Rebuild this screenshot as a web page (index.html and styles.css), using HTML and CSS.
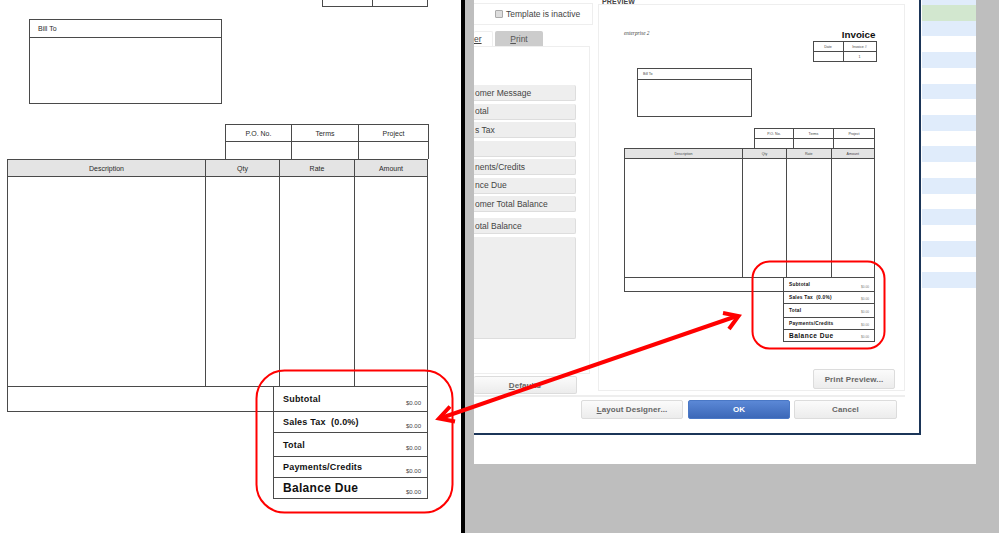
FILE: index.html
```html
<!DOCTYPE html>
<html lang="en">
<head>
<meta charset="utf-8">
<title>Invoice template</title>
<link rel="stylesheet" href="styles.css">
</head>
<body>
<main class="page">
  <section class="left doc">
    <div class="stub"><div></div><div></div></div>
    <div class="bill">
      <div class="bill-head">Bill To</div>
    </div>
    <div class="po">
      <div class="cell">P.O. No.</div><div class="cell">Terms</div><div class="cell end">Project</div>
      <div class="cell blank"></div><div class="cell blank"></div><div class="cell blank end"></div>
    </div>
    <div class="items">
      <div class="cell head">Description</div><div class="cell head">Qty</div><div class="cell head">Rate</div><div class="cell head end">Amount</div>
      <div class="col"></div><div class="col"></div><div class="col"></div><div class="col end"></div>
    </div>
    <div class="foot">
      <div class="foot-left"></div>
      <div class="totals">
        <div class="row r1"><span class="label">Subtotal</span><span class="amt">$0.00</span></div>
        <div class="row r2"><span class="label">Sales Tax&nbsp; (0.0%)</span><span class="amt">$0.00</span></div>
        <div class="row r3"><span class="label">Total</span><span class="amt">$0.00</span></div>
        <div class="row r4"><span class="label">Payments/Credits</span><span class="amt">$0.00</span></div>
        <div class="row r5"><span class="label big">Balance Due</span><span class="amt">$0.00</span></div>
      </div>
    </div>
  </section>

  <div class="divider"></div>

  <section class="right">
    <div class="sheet">
      <div class="dialog">
        <div class="dialog-main">
          <div class="settings">
            <div class="inactive"><span class="check"></span><span>Template is inactive</span></div>
            <div class="tabs">
              <div class="tab active"><u>er</u></div>
              <div class="tab"><u>P</u>rint</div>
            </div>
            <div class="panel">
              <div class="field">omer Message</div>
              <div class="field">otal</div>
              <div class="field">s Tax</div>
              <div class="field"></div>
              <div class="field">nents/Credits</div>
              <div class="field">nce Due</div>
              <div class="field">omer Total Balance</div>
              <div class="field apart">otal Balance</div>
              <div class="field area"></div>
            </div>
            <button class="btn defaults"><u>D</u>efaults</button>
          </div>
          <div class="preview">
            <div class="legend">PREVIEW</div>
            <div class="preview-box">
              <div class="mini doc">
                <div class="mini-head">
                  <span class="brand">enterprise 2</span>
                  <div class="mini-title">
                    <div class="invoice">Invoice</div>
                    <div class="date">
                      <div class="cell">Date</div><div class="cell end">Invoice #</div>
                      <div class="cell blank"></div><div class="cell blank end">1</div>
                    </div>
                  </div>
                </div>
                <div class="bill">
                  <div class="bill-head">Bill To</div>
                </div>
                <div class="po">
                  <div class="cell">P.O. No.</div><div class="cell">Terms</div><div class="cell end">Project</div>
                  <div class="cell blank"></div><div class="cell blank"></div><div class="cell blank end"></div>
                </div>
                <div class="items">
                  <div class="cell head">Description</div><div class="cell head">Qty</div><div class="cell head">Rate</div><div class="cell head end">Amount</div>
                  <div class="col"></div><div class="col"></div><div class="col"></div><div class="col end"></div>
                </div>
                <div class="foot">
                  <div class="foot-left"></div>
                  <div class="totals">
                    <div class="row r1"><span class="label">Subtotal</span><span class="amt">$0.00</span></div>
                    <div class="row r2"><span class="label">Sales Tax&nbsp; (0.0%)</span><span class="amt">$0.00</span></div>
                    <div class="row r3"><span class="label">Total</span><span class="amt">$0.00</span></div>
                    <div class="row r4"><span class="label">Payments/Credits</span><span class="amt">$0.00</span></div>
                    <div class="row r5"><span class="label big">Balance Due</span><span class="amt">$0.00</span></div>
                  </div>
                </div>
              </div>
              <button class="btn print">Print Preview...</button>
            </div>
          </div>
        </div>
        <div class="separator"></div>
        <div class="actions">
          <button class="btn"><u>L</u>ayout Designer...</button>
          <button class="btn ok">OK</button>
          <button class="btn cancel">Cancel</button>
        </div>
      </div>
      <div class="stripes">
        <div class="s blue first"></div><div class="s green"></div>
        <div class="s blue"></div><div class="s"></div>
        <div class="s blue"></div><div class="s"></div>
        <div class="s blue"></div><div class="s"></div>
        <div class="s blue"></div><div class="s"></div>
        <div class="s blue"></div><div class="s"></div>
        <div class="s blue"></div><div class="s"></div>
        <div class="s blue"></div><div class="s"></div>
        <div class="s blue"></div><div class="s"></div>
        <div class="s blue"></div>
      </div>
    </div>
  </section>

  <svg class="marks" width="999" height="533" viewBox="0 0 999 533" aria-hidden="true">
    <rect x="256.5" y="370.5" width="196" height="142" rx="28" fill="none" stroke="#f00" stroke-width="2"/>
    <rect x="752.5" y="261.5" width="132" height="87" rx="17" fill="none" stroke="#f00" stroke-width="2"/>
    <path d="M441 418 L737 316" fill="none" stroke="#f00" stroke-width="4"/>
    <path d="M450 406.5 L439 418.5 L455 421.5" fill="none" stroke="#f00" stroke-width="4"/>
    <path d="M723 313 L738.5 316 L729 329" fill="none" stroke="#f00" stroke-width="4"/>
  </svg>
</main>
</body>
</html>
```
FILE: styles.css
```css
* { box-sizing: border-box; }
html, body { margin: 0; padding: 0; }
body { font-family: "Liberation Sans", Arial, sans-serif; color: #333; background: #fff; }

.page { position: relative; display: flex; width: 999px; height: 533px; overflow: hidden; background: #fff; }
.marks { position: absolute; left: 0; top: 0; pointer-events: none; }

/* Invoice form: shared structure, full-size variant */
.doc { --line: 1px solid #4a4a4a; display: flex; flex-direction: column; }
.left { width: 461px; flex: none; padding-left: 7px; font-size: 7px; }
.cell { display: flex; align-items: center; justify-content: center; border-right: var(--line); border-bottom: var(--line); color: #2a2a2a; }
.cell.end { border-right: 0; }
.cell.blank { border-bottom: 0; }
.cell.head { background: #e4e4e4; }

.stub { display: grid; grid-template-columns: 50px 56px; margin-left: 315px; height: 7px; border: var(--line); border-top: 0; width: 106px; }
.stub div:first-child { border-right: var(--line); }

.bill { margin: 12px 0 0 22px; width: 193px; height: 85px; border: var(--line); }
.bill-head { height: 18px; padding-left: 8px; display: flex; align-items: center; border-bottom: var(--line); color: #2a2a2a; }

.po { display: grid; grid-template-columns: 66px 67px 1fr; grid-template-rows: 17px 17px; margin: 20px 0 0 218px; width: 204px; height: 35px; border: var(--line); border-bottom: 0; }

.items { display: grid; grid-template-columns: 198px 74px 75px 1fr; grid-template-rows: 17px 209px; width: 421px; border: var(--line); }
.col { border-right: var(--line); }
.col.end { border-right: 0; }

.foot { display: flex; align-items: flex-start; width: 421px; }
.foot-left { width: 266px; height: 25px; border-left: var(--line); border-bottom: var(--line); }
.totals { flex: 1; border-left: var(--line); border-right: var(--line); }
.row { display: flex; justify-content: space-between; padding: 0 6px 2px 9px; border-bottom: var(--line); }
.r1 { height: 25px; }
.r2 { height: 21px; }
.r3 { height: 24px; }
.r4 { height: 21px; }
.r5 { height: 21px; }
.label { align-self: center; margin-top: 2px; font-size: 9px; font-weight: bold; letter-spacing: .2px; color: #111; white-space: nowrap; }
.label.big { font-size: 12px; letter-spacing: .3px; }
.amt { align-self: flex-end; font-size: 6px; line-height: 8px; color: #444; }
.r1 .amt, .r3 .amt { margin-bottom: 2px; }

.divider { width: 4px; flex: none; background: #000; }

/* Right: application window screenshot */
.right { flex: 1; background: #bebebe; padding-left: 9px; }
.sheet { display: flex; width: 502px; height: 464px; background: #fff; }
.dialog { display: flex; flex-direction: column; width: 447px; height: 435px; flex: none; padding-right: 14px; border-right: 2px solid #1b3558; border-bottom: 2px solid #1b3558; }
.dialog-main { display: flex; height: 395px; }

.settings { width: 123.5px; flex: none; padding-top: 3px; font-size: 8.5px; color: #444; }
.inactive { display: flex; align-items: center; gap: 3px; width: 119px; height: 22px; padding-left: 21px; border: 1px solid #eee; border-left: 0; white-space: nowrap; }
.check { width: 8px; height: 8px; border: 1px solid #aaa; border-radius: 1px; background: #ddd; flex: none; }
.tabs { display: flex; gap: 2px; margin-top: 6px; height: 15px; }
.tab { display: flex; align-items: center; justify-content: center; width: 48px; background: #ccc; border-radius: 2px 2px 0 0; color: #555; }
.tab.active { width: 19px; justify-content: flex-start; background: #fff; border: 1px solid #eee; border-left: 0; border-bottom: 0; color: #444; }
.panel { display: flex; flex-direction: column; gap: 2.5px; width: 115.5px; height: 328px; padding-top: 38px; border: 1px solid #eee; border-left: 0; }
.field { width: 102px; height: 16px; flex: none; padding-left: 1px; display: flex; align-items: center; background: #eee; border-right: 1px solid #ddd; border-bottom: 1px solid #ddd; border-radius: 0 2px 2px 0; white-space: nowrap; }
.field.apart { margin-top: 3.5px; }
.area { height: 102px; margin-top: .5px; }

.btn { font: bold 8px "Liberation Sans", Arial, sans-serif; letter-spacing: .1px; color: #666; padding: 0; height: 19px; background: linear-gradient(#fbfbfb, #ececec); border: 1px solid #dcdcdc; border-radius: 2px; }
.defaults { width: 103px; margin-top: 2px; height: 18px; border-left: 0; }

.preview { flex: 1; display: flex; flex-direction: column; }
.legend { height: 4px; line-height: 4px; padding-left: 4.5px; font-size: 7px; font-weight: bold; color: #444; letter-spacing: .1px; }
.preview-box { display: flex; flex-direction: column; height: 387px; border: 1px solid #eee; }
.print { align-self: flex-end; width: 82px; height: 20px; margin: auto 9px 1px 0; }

.separator { height: 2px; background: #eee; }
.actions { display: flex; gap: 5px; padding: 3px 0 0 107px; }
.actions .btn { width: 102px; }
.actions .ok { background: linear-gradient(#5b88d6, #3c68b8); border-color: #4a78c6; color: #fff; }
.actions .cancel { width: 103px; margin-left: -1px; }

.stripes { flex: 1; margin-left: 1px; }
.s { height: 15.72px; }
.s.first { height: 5px; }
.blue { background: #e0ecfb; }
.green { background: #d2e7cf; }

/* Invoice form: preview variant */
.mini { font-size: 3.6px; width: 278px; padding: 24px 0 0 25.5px; }
.mini .cell, .mini .bill-head { color: #444; }
.mini-head { display: flex; justify-content: space-between; height: 32px; }
.brand { font: italic 5.3px "Liberation Serif", serif; color: #444; padding-top: 1px; }
.mini-title { display: flex; flex-direction: column; align-items: flex-end; }
.invoice { font-size: 9.8px; line-height: 11px; font-weight: bold; color: #111; padding: 0 1px 0 0; }
.date { display: grid; grid-template-columns: 30px 1fr; grid-template-rows: 10px 9px; width: 64px; height: 21px; margin-top: 1px; border: var(--line); }
.mini .bill { margin: 7px 0 0 13px; width: 115px; height: 49px; }
.mini .bill-head { height: 11px; padding-left: 5px; }
.mini .po { grid-template-columns: 39px 40px 1fr; grid-template-rows: 10px 9px; margin: 11px 0 0 130px; width: 121px; height: 20px; }
.mini .items { width: 251px; grid-template-columns: 118px 44px 44.5px 1fr; grid-template-rows: 10px 118px; }
.mini .foot { width: 251px; }
.mini .foot-left { width: 159px; height: 14px; }
.mini .row { padding: 0 5px 1px 5px; }
.mini .r1 { height: 14px; }
.mini .r2 { height: 12px; }
.mini .r3 { height: 14px; }
.mini .r4 { height: 12px; }
.mini .r5 { height: 12px; }
.mini .r1 .amt, .mini .r2 .amt, .mini .r4 .amt, .mini .r5 .amt { margin-bottom: 0; }
.mini .r3 .amt { margin-bottom: 1px; }
.mini .label { margin-top: 0; font-size: 4.8px; letter-spacing: .25px; }
.mini .label.big { font-size: 6.6px; letter-spacing: .45px; }
.mini .amt { font-size: 3.2px; line-height: 5px; color: #777; }
```
